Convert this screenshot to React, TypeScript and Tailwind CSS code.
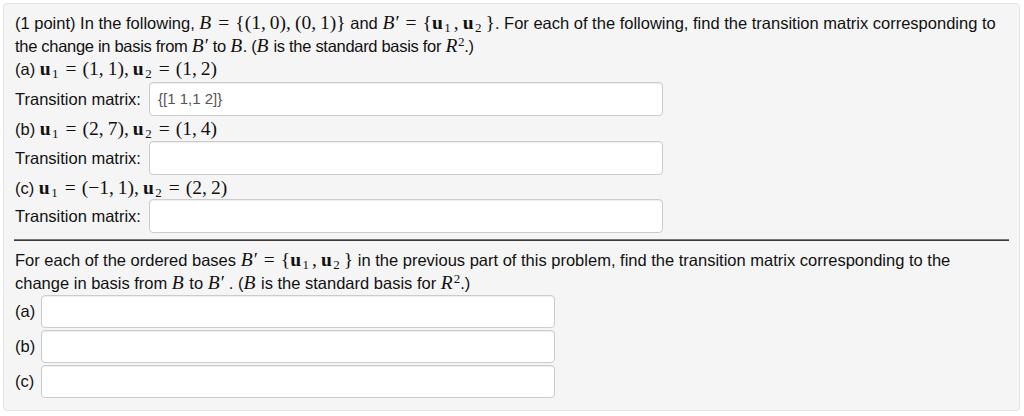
import React from "react";

const serif = "font-['Liberation_Serif',serif] text-[19.5px]";

function I({ children }: { children: React.ReactNode }) {
  return <i className={`${serif} pr-[1px]`}>{children}</i>;
}

function R({ children }: { children: React.ReactNode }) {
  return <span className={serif}>{children}</span>;
}

function U({ n }: { n: string }) {
  return (
    <span className={serif}>
      <b className="tracking-[0.5px]">u</b>
      <sub className="text-[13px] ml-[1px] mr-[1px]">{n}</sub>
    </span>
  );
}

function Eq() {
  return <span className={`${serif} mx-[6px]`}>=</span>;
}

function C() {
  return <span className={`${serif} mr-[4px]`}>,</span>;
}

function Tup({ a, b }: { a: string; b: string }) {
  return (
    <R>
      ({a}
      <C />
      {b})
    </R>
  );
}

function Box({ value, h = "h-[34px]" }: { value?: string; h?: string }) {
  return (
    <div
      className={`${h} flex-1 bg-white border border-[#cccccc] rounded-[4px] shadow-[inset_0_1px_1px_rgba(0,0,0,0.075)] flex items-center pl-[8px] text-[15px] text-[#555555]`}
    >
      {value}
    </div>
  );
}

function MatrixRow({ value, mt }: { value?: string; mt: string }) {
  return (
    <div className={`flex items-center ${mt} w-[649px]`}>
      <div className="w-[135px] shrink-0 pl-[1px]">Transition matrix:</div>
      <Box value={value} />
    </div>
  );
}

function Line({ children, extra = "" }: { children: React.ReactNode; extra?: string }) {
  return <div className={`h-[23px] leading-[23px] whitespace-nowrap pl-[1px] ${extra}`}>{children}</div>;
}

function SmallRow({ label, mt }: { label: string; mt: string }) {
  return (
    <div className={`flex items-center ${mt} w-[541px]`}>
      <div className="w-[27px] shrink-0 pl-[1px]">{label}</div>
      <Box h="h-[33px]" />
    </div>
  );
}

function Bp() {
  return <I>B′</I>;
}

function Set() {
  return (
    <>
      <R>{"{"}</R>
      <U n="1" />
      <span className={`${serif} ml-[2px] mr-[4px]`}>,</span>
      <U n="2" />
      <span className={`${serif} ml-[3px]`}>{"}"}</span>
    </>
  );
}

function R2() {
  return (
    <>
      <I>R</I>
      <sup className="font-['Liberation_Serif',serif] text-[13px]">2</sup>
    </>
  );
}

export default function App() {
  return (
    <div className="w-[1024px] h-[416px] bg-white pt-[3px] pl-[3px] font-['Liberation_Sans',Arial,sans-serif] text-[16.5px] text-[#111111]">
      <div className="w-[1017px] h-[408px] bg-[#f5f5f5] border border-[#e3e3e3] rounded-[4px] pt-[7px] pl-[10px] pr-[10px] flex flex-col">
        <Line>
          (1 point) In the following, <I>B</I>
          <Eq />
          <R>
            {"{"}
            <Tup a="1" b="0" />
            <C />
            <Tup a="0" b="1" />
            {"}"}
          </R>{" "}
          and <Bp />
          <Eq />
          <Set />. For each of the following, find the transition matrix corresponding to
        </Line>
        <Line extra="tracking-[-0.3px]">
          the change in basis from <Bp /> to <I>B</I>. (<I>B</I> is the standard basis for <R2 />.)
        </Line>
        <Line>
          (a) <U n="1" />
          <Eq />
          <Tup a="1" b="1" />
          <C />
          <U n="2" />
          <Eq />
          <Tup a="1" b="2" />
        </Line>
        <MatrixRow value="{[1 1,1 2]}" mt="mt-[2px]" />
        <div className="mt-[1px]">
          <Line>
            (b) <U n="1" />
            <Eq />
            <Tup a="2" b="7" />
            <C />
            <U n="2" />
            <Eq />
            <Tup a="1" b="4" />
          </Line>
        </div>
        <MatrixRow mt="mt-[1px]" />
        <div className="mt-[1px]">
          <Line>
            (c) <U n="1" />
            <Eq />
            <Tup a={"\u22121"} b="1" />
            <C />
            <U n="2" />
            <Eq />
            <Tup a="2" b="2" />
          </Line>
        </div>
        <MatrixRow mt="mt-0" />
        <div className="mt-[6px] h-[2px] bg-[#3a3a3a] border-t border-[#777777]" />
        <div className="mt-[7px]">
          <Line>
            For each of the ordered bases <Bp />
            <Eq />
            <Set /> in the previous part of this problem, find the transition matrix corresponding to the
          </Line>
          <Line>
            change in basis from <I>B</I> to <Bp />
            <R>{"\u2009"}</R>. (<I>B</I> is the standard basis for <R2 />.)
          </Line>
        </div>
        <SmallRow label="(a)" mt="mt-[1px]" />
        <SmallRow label="(b)" mt="mt-[2px]" />
        <SmallRow label="(c)" mt="mt-[2px]" />
      </div>
    </div>
  );
}
